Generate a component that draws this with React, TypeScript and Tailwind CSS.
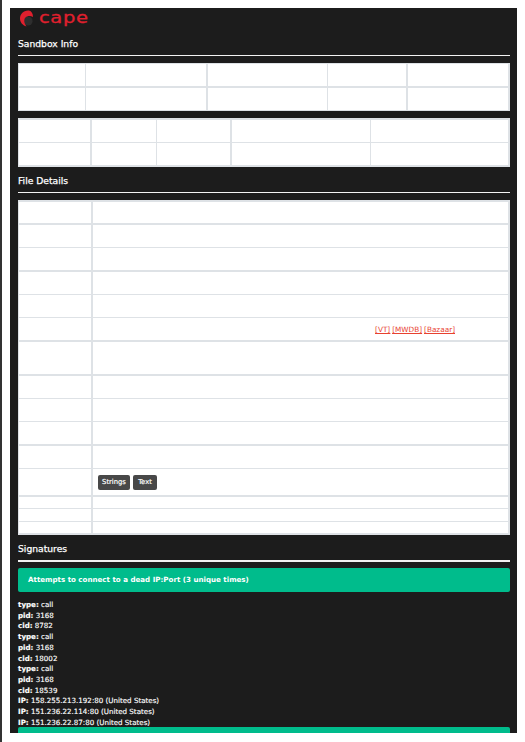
type Row = { h: string; sep: string; content?: React.ReactNode };

function Cells({ cols, children }: { cols: string[]; children?: React.ReactNode }) {
  return (
    <>
      {cols.map((c, i) => (
        <div key={i} className={c}>
          {i === cols.length - 1 ? children : null}
        </div>
      ))}
    </>
  );
}

const t1Cols = [
  "w-[67px] shrink-0 border-r border-[#dee2e6]",
  "w-[122px] shrink-0 border-r-2 border-[#dee2e6]",
  "w-[120px] shrink-0 border-r border-[#dee2e6]",
  "w-[80px] shrink-0 border-r-2 border-[#dee2e6]",
  "flex-1",
];
const t2Cols = [
  "w-[73px] shrink-0 border-r-2 border-[#dee2e6]",
  "w-[65px] shrink-0 border-r border-[#dee2e6]",
  "w-[75px] shrink-0 border-r-2 border-[#dee2e6]",
  "w-[139px] shrink-0 border-r border-[#dee2e6]",
  "flex-1",
];
const t3Cols = ["w-[74px] shrink-0 border-r-2 border-[#dee2e6]", "flex-1 relative"];

const links = (
  <div className="flex h-full items-center justify-end gap-[2px] pt-[3px] pr-[53px] text-[7.3px] text-[#e8412f] underline">
    <a>[VT]</a>
    <a>[MWDB]</a>
    <a>[Bazaar]</a>
  </div>
);
const btn =
  "flex h-[15px] items-center justify-center rounded-[2px] bg-[#484848] text-[6.8px] text-white [-webkit-text-stroke:0.2px_white]";
const buttons = (
  <div className="flex h-full items-center gap-[3px] pl-[5px]">
    <button className={`${btn} w-[32px]`}>Strings</button>
    <button className={`${btn} w-[24px]`}>Text</button>
  </div>
);

const t3Rows: Row[] = [
  { h: "h-[21px]", sep: "border-b-2" },
  { h: "h-[22px]", sep: "border-b" },
  { h: "h-[22px]", sep: "border-b-2" },
  { h: "h-[22px]", sep: "border-b" },
  { h: "h-[22px]", sep: "border-b" },
  { h: "h-[22px]", sep: "border-b-2", content: links },
  { h: "h-[32px]", sep: "border-b-2" },
  { h: "h-[22px]", sep: "border-b" },
  { h: "h-[22px]", sep: "border-b" },
  { h: "h-[22px]", sep: "border-b-2" },
  { h: "h-[22px]", sep: "border-b" },
  { h: "h-[26px]", sep: "border-b-2", content: buttons },
  { h: "h-[11px]", sep: "border-b" },
  { h: "h-[12px]", sep: "border-b" },
  { h: "h-[11px]", sep: "" },
];

function Heading({ children }: { children: React.ReactNode }) {
  return (
    <div className="text-[9.2px] leading-[14px] text-white [-webkit-text-stroke:0.25px_white]">{children}</div>
  );
}

const sigLines: [string, string][] = [
  ["type:", "call"],
  ["pid:", "3168"],
  ["cid:", "8782"],
  ["type:", "call"],
  ["pid:", "3168"],
  ["cid:", "18002"],
  ["type:", "call"],
  ["pid:", "3168"],
  ["cid:", "18539"],
  ["IP:", "158.255.213.192:80 (United States)"],
  ["IP:", "151.236.22.114:80 (United States)"],
  ["IP:", "151.236.22.87:80 (United States)"],
];

function Logo() {
  return (
    <div className="flex h-[20px] items-center gap-[5px]">
      <svg width="14" height="17" viewBox="0 0 14 17">
        <circle cx="8" cy="11" r="4.6" fill="#2e2e2e" />
        <path
          d="M9 0.5 C3.5 0 0 4 0 8.5 C0 12.5 3 15.5 6.5 16.5 C4 13.5 3.5 9.5 5.5 7.5 C7.5 5.5 10.5 5.5 13 7 C13 3.5 11.5 1 9 0.5 Z"
          fill="#e0202e"
        />
      </svg>
      <span className="origin-left scale-x-[1.22] text-[16px] leading-[20px] tracking-[0.5px] text-[#e0202e] [-webkit-text-stroke:0.3px_#e0202e]">
        cape
      </span>
    </div>
  );
}

export default function App() {
  return (
    <div className="relative h-[742px] w-[525px] overflow-hidden bg-white font-['DejaVu_Sans',sans-serif]">
      <div className="absolute top-0 left-0 h-full w-[2px] bg-[#333333]" />
      <div className="ml-[10px] h-[725px] w-[507px] translate-y-[8px] overflow-hidden bg-[#1c1c1c] pr-[7px] pl-[8px]">
        <div className="pl-[2px]">
          <Logo />
        </div>
        <div className="mt-[9px]">
          <Heading>Sandbox Info</Heading>
        </div>
        <div className="mt-[4px] h-px bg-[#f2f2f2]" />

        <div className="mt-[7px] border-t border-r-2 border-b border-l border-[#dee2e6] bg-white">
          <div className="box-content flex h-[22px] border-b-2 border-[#dee2e6]">
            <Cells cols={t1Cols} />
          </div>
          <div className="flex h-[22px]">
            <Cells cols={t1Cols} />
          </div>
        </div>

        <div className="mt-[7px] border-t-2 border-r-2 border-b-2 border-l border-[#dee2e6] bg-white">
          <div className="box-content flex h-[22px] border-b border-[#dee2e6]">
            <Cells cols={t2Cols} />
          </div>
          <div className="flex h-[22px]">
            <Cells cols={t2Cols} />
          </div>
        </div>

        <div className="mt-[7px]">
          <Heading>File Details</Heading>
        </div>
        <div className="mt-[4px] h-px bg-[#f2f2f2]" />

        <div className="mt-[7px] border-t-2 border-r-2 border-b-2 border-l border-[#dee2e6] bg-white">
          {t3Rows.map((r, i) => (
            <div key={i} className={`box-content flex border-[#dee2e6] ${r.h} ${r.sep}`}>
              <Cells cols={t3Cols}>{r.content}</Cells>
            </div>
          ))}
        </div>

        <div className="mt-[7px]">
          <Heading>Signatures</Heading>
        </div>
        <div className="mt-[4px] h-[2px] bg-[#f2f2f2]" />

        <div className="mt-[6px] flex h-[24px] items-center rounded-[2px] bg-[#00bc8c] pl-[10px] text-[7.1px] font-bold text-white">
          Attempts to connect to a dead IP:Port (3 unique times)
        </div>

        <div className="mt-[8px] text-[7.1px] leading-[10.7px] text-white [-webkit-text-stroke:0.15px_white]">
          {sigLines.map(([k, v], i) => (
            <div key={i}>
              <b>{k}</b> {v}
            </div>
          ))}
        </div>
        <div className="-mt-px h-[24px] rounded-[2px] bg-[#00bc8c]" />
      </div>
    </div>
  );
}
